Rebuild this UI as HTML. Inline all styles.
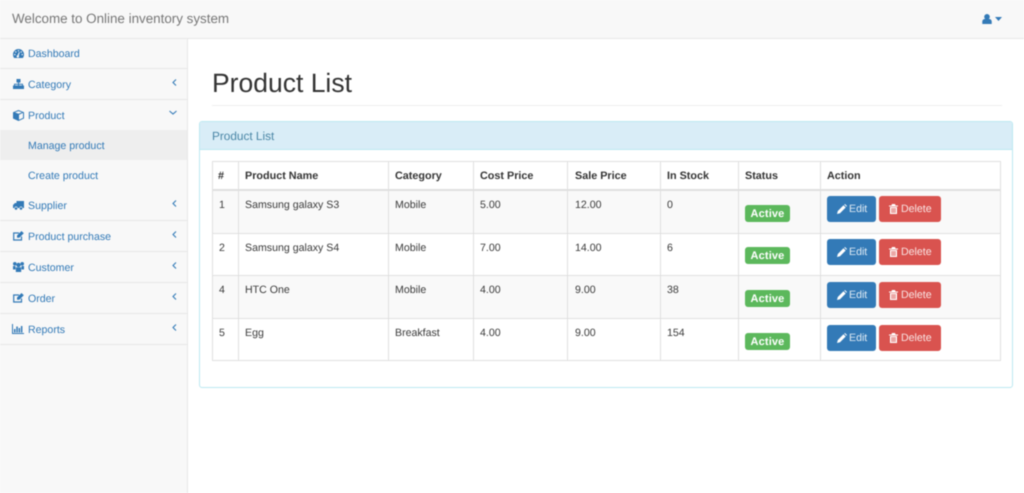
<!DOCTYPE html>
<html><head><meta charset="utf-8"><style>
html,body{margin:0;padding:0;background:#fff}
body{width:1024px;height:493px;overflow:hidden;position:relative;font-family:"Liberation Sans",Arial,sans-serif;color:#333;text-rendering:geometricPrecision;filter:blur(.45px)}
.a{position:absolute}
.t{position:absolute;white-space:nowrap;line-height:14px;font-size:10.6px}
.s{color:#337ab7}
.sep{position:absolute;left:0;width:187px;height:1px;background:#e7e7e7}
.h{position:absolute;background:#e0e0e0}
.th{font-weight:bold;font-size:10.8px;color:#333}
.td{color:#3a3a3a}
.lab{position:absolute;left:745px;width:45px;height:17px;background:#5cb85c;border-radius:3px;color:#fff;font-weight:bold;font-size:11px;line-height:18px;text-align:center;letter-spacing:.15px}
.btn{position:absolute;height:26px;border-radius:3px;color:#fff;font-size:10.6px;line-height:27px;white-space:nowrap}
.e{left:827px;width:49px;background:#337ab7;border:0}
.d{left:879px;width:62px;background:#d9534f}
.btn svg{position:absolute;top:8px}
.btn span{position:absolute;top:0;left:22px;opacity:.85}
svg.i{position:absolute;fill:#337ab7}
.ch{position:absolute;fill:none;stroke:#337ab7;stroke-width:1.1}
</style></head><body>

<div class="a" style="left:0;top:0;width:1024px;height:38px;background:#f8f8f8;border-bottom:1px solid #e7e7e7"></div>
<div class="t" style="left:12px;top:12px;font-size:13.4px;color:#777">Welcome to Online inventory system</div>
<svg class="i" style="left:982px;top:14px" width="10" height="10" viewBox="0 0 10 10"><circle cx="5" cy="2.800" r="2.800"/><path d="M.3 10V7.600C.3 6 1.500 5 3 5h4c1.500 0 2.700 1 2.700 2.600V10z"/></svg>
<svg class="i" style="left:995px;top:17px" width="7" height="4" viewBox="0 0 7 4"><path d="M0 0h7L3.500 4z"/></svg>

<div class="a" style="left:0;top:39px;width:187px;height:454px;background:#f8f8f8;border-right:1px solid #e7e7e7"></div>
<div class="sep" style="top:68px"></div>
<div class="sep" style="top:99px"></div>
<div class="sep" style="top:220px"></div>
<div class="sep" style="top:251px"></div>
<div class="sep" style="top:282px"></div>
<div class="sep" style="top:313px"></div>
<div class="sep" style="top:344px"></div>
<div class="a" style="left:0;top:130px;width:187px;height:30px;background:#eee"></div>

<svg class="i" style="left:13px;top:49px" width="11" height="9" viewBox="0 0 11 9"><path d="M5.500 0A5.500 5.500 0 0 0 0 5.500c0 1.300.4 2.500 1.200 3.500h8.600c.8-1 1.200-2.200 1.200-3.500A5.500 5.500 0 0 0 5.500 0z"/><g fill="#f8f8f8"><circle cx="5.500" cy="1.800" r=".7"/><circle cx="2.800" cy="3" r=".7"/><circle cx="8.200" cy="3" r=".7"/><circle cx="1.800" cy="5.600" r=".7"/><circle cx="9.200" cy="5.600" r=".7"/><path d="M4.500 6.200L6 3l.8.300-1 3.300a1.200 1.200 0 1 1-1.300-.4z"/></g></svg>
<div class="t s" style="left:28px;top:47px">Dashboard</div>

<svg class="i" style="left:13px;top:79px" width="11" height="10" viewBox="0 0 11 10"><path d="M3.500 0h4v3.500H6v1.200h4v1.800h1V10H7.500V6.500H9V5.700H6v.8h1.500V10h-4V6.500H5v-.8H2v.8h1.500V10H0V6.500h1V4.700h4V3.500H3.500z"/></svg>
<div class="t s" style="left:28px;top:78px">Category</div>
<svg class="ch" style="left:172px;top:79px" width="5" height="7" viewBox="0 0 5 7"><path d="M4 .5L1 3.500l3 3"/></svg>

<svg class="i" style="left:13px;top:110px" width="11" height="11" viewBox="0 0 11 11"><path d="M5.500 0L11 2.200v6.300L5.500 11 0 8.500V2.200zM5.500 1.100L2 2.400l3.500 1.400L9 2.400zM6 4.700v5l4-1.800v-5z" fill-rule="evenodd"/></svg>
<div class="t s" style="left:28px;top:109px">Product</div>
<svg class="ch" style="left:169px;top:110px" width="8" height="5" viewBox="0 0 8 5"><path d="M.5 1l3.500 3 3.500-3"/></svg>

<div class="t s" style="left:28px;top:139px">Manage product</div>
<div class="t s" style="left:28px;top:169px">Create product</div>

<svg class="i" style="left:13px;top:201px" width="11" height="9" viewBox="0 0 11 9"><path d="M3.500 0H11v7H9.500a1.500 1.500 0 0 0-3 0H4.500a1.500 1.500 0 0 0-3 0H0V4l2-2h1.500z"/><circle cx="3" cy="7.500" r="1.300"/><circle cx="8" cy="7.500" r="1.300"/></svg>
<div class="t s" style="left:28px;top:199px">Supplier</div>
<svg class="ch" style="left:172px;top:200px" width="5" height="7" viewBox="0 0 5 7"><path d="M4 .5L1 3.500l3 3"/></svg>

<svg style="position:absolute;left:13px;top:231px" width="11" height="10" viewBox="0 0 11 10"><path d="M8.500 5.500V9H.7V2H6" fill="none" stroke="#337ab7" stroke-width="1.200"/><path d="M4 4.500L8.500 0 10.800 2.300 6.300 6.800H4z" fill="#337ab7"/></svg>
<div class="t s" style="left:28px;top:230px">Product purchase</div>
<svg class="ch" style="left:172px;top:231px" width="5" height="7" viewBox="0 0 5 7"><path d="M4 .5L1 3.500l3 3"/></svg>

<svg class="i" style="left:13px;top:262px" width="11" height="10" viewBox="0 0 11 10"><circle cx="5.500" cy="3" r="2.200"/><circle cx="1.800" cy="1.800" r="1.800"/><circle cx="9.200" cy="1.800" r="1.800"/><path d="M0 4h2.500v3.500H0zM8.500 4H11v3.500H8.500zM2.800 5.200h5.400V10H2.800z"/></svg>
<div class="t s" style="left:28px;top:261px">Customer</div>
<svg class="ch" style="left:172px;top:262px" width="5" height="7" viewBox="0 0 5 7"><path d="M4 .5L1 3.500l3 3"/></svg>

<svg style="position:absolute;left:13px;top:293px" width="11" height="10" viewBox="0 0 11 10"><path d="M8.500 5.500V9H.7V2H6" fill="none" stroke="#337ab7" stroke-width="1.200"/><path d="M4 4.500L8.500 0 10.800 2.300 6.300 6.800H4z" fill="#337ab7"/></svg>
<div class="t s" style="left:28px;top:292px">Order</div>
<svg class="ch" style="left:172px;top:293px" width="5" height="7" viewBox="0 0 5 7"><path d="M4 .5L1 3.500l3 3"/></svg>

<svg class="i" style="left:12px;top:324px" width="12" height="10" viewBox="0 0 12 10"><path d="M0 0h1v9h11v1H0zM2 5h1.500v3.500H2zM4.300 2.500h1.500v6H4.300zM6.600 4h1.500v4.500H6.600zM8.900 2h1.500v6.500H8.900z"/></svg>
<div class="t s" style="left:28px;top:323px">Reports</div>
<svg class="ch" style="left:172px;top:324px" width="5" height="7" viewBox="0 0 5 7"><path d="M4 .5L1 3.500l3 3"/></svg>

<div class="t" style="left:212px;top:67px;font-size:26.500px;line-height:32px;color:#333">Product List</div>
<div class="a" style="left:212px;top:105px;width:790px;height:1px;background:#eee"></div>

<div class="a" style="left:199px;top:121px;width:812px;height:265px;border:1px solid #bce8f1;border-radius:3px;background:#fff"></div>
<div class="a" style="left:200px;top:122px;width:812px;height:27px;background:#d9edf7;border-bottom:1px solid #bce8f1;border-radius:2px 2px 0 0"></div>
<div class="t" style="left:212px;top:128.500px;font-size:11.800px;color:#4a86a6">Product List</div>

<div class="a" style="left:212px;top:190px;width:789px;height:43px;background:#f9f9f9"></div>
<div class="a" style="left:212px;top:276px;width:789px;height:43px;background:#f9f9f9"></div>

<div class="h" style="left:212px;top:161px;width:789px;height:1px"></div>
<div class="h" style="left:212px;top:189px;width:789px;height:2px"></div>
<div class="h" style="left:212px;top:233px;width:789px;height:1px"></div>
<div class="h" style="left:212px;top:275px;width:789px;height:1px"></div>
<div class="h" style="left:212px;top:318px;width:789px;height:1px"></div>
<div class="h" style="left:212px;top:360px;width:789px;height:1px"></div>
<div class="h" style="left:212px;top:161px;width:1px;height:200px"></div>
<div class="h" style="left:238px;top:161px;width:1px;height:200px"></div>
<div class="h" style="left:388px;top:161px;width:1px;height:200px"></div>
<div class="h" style="left:473px;top:161px;width:1px;height:200px"></div>
<div class="h" style="left:567px;top:161px;width:1px;height:200px"></div>
<div class="h" style="left:660px;top:161px;width:1px;height:200px"></div>
<div class="h" style="left:738px;top:161px;width:1px;height:200px"></div>
<div class="h" style="left:820px;top:161px;width:1px;height:200px"></div>
<div class="h" style="left:1000px;top:161px;width:1px;height:200px"></div>

<div class="t th" style="left:218px;top:169px">#</div>
<div class="t th" style="left:245px;top:169px">Product Name</div>
<div class="t th" style="left:395px;top:169px">Category</div>
<div class="t th" style="left:480px;top:169px">Cost Price</div>
<div class="t th" style="left:575px;top:169px">Sale Price</div>
<div class="t th" style="left:667px;top:169px">In Stock</div>
<div class="t th" style="left:745px;top:169px">Status</div>
<div class="t th" style="left:827px;top:169px">Action</div>

<div class="t td" style="left:219px;top:197.500px">1</div><div class="t td" style="left:245px;top:197.500px">Samsung galaxy S3</div><div class="t td" style="left:395px;top:197.500px">Mobile</div><div class="t td" style="left:480px;top:197.500px">5.00</div><div class="t td" style="left:575px;top:197.500px">12.00</div><div class="t td" style="left:667px;top:197.500px">0</div>
<div class="t td" style="left:219px;top:240.500px">2</div><div class="t td" style="left:245px;top:240.500px">Samsung galaxy S4</div><div class="t td" style="left:395px;top:240.500px">Mobile</div><div class="t td" style="left:480px;top:240.500px">7.00</div><div class="t td" style="left:575px;top:240.500px">14.00</div><div class="t td" style="left:667px;top:240.500px">6</div>
<div class="t td" style="left:219px;top:282.500px">4</div><div class="t td" style="left:245px;top:282.500px">HTC One</div><div class="t td" style="left:395px;top:282.500px">Mobile</div><div class="t td" style="left:480px;top:282.500px">4.00</div><div class="t td" style="left:575px;top:282.500px">9.00</div><div class="t td" style="left:667px;top:282.500px">38</div>
<div class="t td" style="left:219px;top:325.500px">5</div><div class="t td" style="left:245px;top:325.500px">Egg</div><div class="t td" style="left:395px;top:325.500px">Breakfast</div><div class="t td" style="left:480px;top:325.500px">4.00</div><div class="t td" style="left:575px;top:325.500px">9.00</div><div class="t td" style="left:667px;top:325.500px">154</div>

<div class="lab" style="top:205px">Active</div>
<div class="lab" style="top:247px">Active</div>
<div class="lab" style="top:290px">Active</div>
<div class="lab" style="top:333px">Active</div>

<div class="btn e" style="top:196px"><svg style="left:10px" width="10" height="10" viewBox="0 0 10 10" fill="#fff"><path d="M0 10l.8-3L6.500 1.300 8.700 3.500 3 9.200zM7.200.6L8 0l2 2-.6.800z"/></svg><span>Edit</span></div>
<div class="btn d" style="top:196px"><svg style="left:10px" width="9" height="10" viewBox="0 0 9 10" fill="#fff"><path d="M3 0h3l.6 1.500H9v1H0v-1h2.400zM1 3h7v7H1zM2.500 4v5h.8V4zM4.100 4v5h.8V4zM5.700 4v5h.8V4z" fill-rule="evenodd"/></svg><span>Delete</span></div>
<div class="btn e" style="top:239px"><svg style="left:10px" width="10" height="10" viewBox="0 0 10 10" fill="#fff"><path d="M0 10l.8-3L6.500 1.300 8.700 3.500 3 9.200zM7.200.6L8 0l2 2-.6.800z"/></svg><span>Edit</span></div>
<div class="btn d" style="top:239px"><svg style="left:10px" width="9" height="10" viewBox="0 0 9 10" fill="#fff"><path d="M3 0h3l.6 1.500H9v1H0v-1h2.400zM1 3h7v7H1zM2.500 4v5h.8V4zM4.100 4v5h.8V4zM5.700 4v5h.8V4z" fill-rule="evenodd"/></svg><span>Delete</span></div>
<div class="btn e" style="top:282px"><svg style="left:10px" width="10" height="10" viewBox="0 0 10 10" fill="#fff"><path d="M0 10l.8-3L6.500 1.300 8.700 3.500 3 9.200zM7.200.6L8 0l2 2-.6.800z"/></svg><span>Edit</span></div>
<div class="btn d" style="top:282px"><svg style="left:10px" width="9" height="10" viewBox="0 0 9 10" fill="#fff"><path d="M3 0h3l.6 1.500H9v1H0v-1h2.400zM1 3h7v7H1zM2.500 4v5h.8V4zM4.100 4v5h.8V4zM5.700 4v5h.8V4z" fill-rule="evenodd"/></svg><span>Delete</span></div>
<div class="btn e" style="top:325px"><svg style="left:10px" width="10" height="10" viewBox="0 0 10 10" fill="#fff"><path d="M0 10l.8-3L6.500 1.300 8.700 3.500 3 9.200zM7.200.6L8 0l2 2-.6.800z"/></svg><span>Edit</span></div>
<div class="btn d" style="top:325px"><svg style="left:10px" width="9" height="10" viewBox="0 0 9 10" fill="#fff"><path d="M3 0h3l.6 1.500H9v1H0v-1h2.400zM1 3h7v7H1zM2.500 4v5h.8V4zM4.100 4v5h.8V4zM5.700 4v5h.8V4z" fill-rule="evenodd"/></svg><span>Delete</span></div>

</body></html>
